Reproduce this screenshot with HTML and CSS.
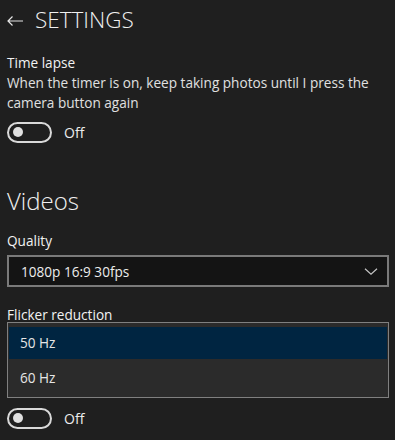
FILE: index.html
```html
<!DOCTYPE html>
<html>
<head>
<meta charset="utf-8">
<link rel="stylesheet" href="styles.css">
</head>
<body>
<div class="page">
  <header class="header">
    <svg class="back" width="16" height="10" viewBox="0 0 16 10"><path d="M5.5 0.5 L1 5 L5.5 9.5 M1 5 H16" fill="none" stroke="#e6e6e6" stroke-width="1.2"/></svg>
    <span class="title">SETTINGS</span>
  </header>

  <div class="setting">
    <div class="label">Time lapse</div>
    <div class="desc">When the timer is on, keep taking photos until I press the camera button again</div>
    <div class="toggle-row">
      <span class="toggle"><span class="knob"></span></span>
      <span class="state">Off</span>
    </div>
  </div>

  <h2 class="section">Videos</h2>

  <div class="field">
    <div class="label">Quality</div>
    <div class="combo">
      <span>1080p 16:9 30fps</span>
      <svg class="chev" width="14" height="7" viewBox="0 0 14 7"><path d="M1 0.8 L7 6.2 L13 0.8" fill="none" stroke="#c4c4c4" stroke-width="1.2"/></svg>
    </div>
  </div>

  <div class="field flicker">
    <div class="label tight">Flicker reduction</div>
    <div class="popup">
      <div class="item selected">50 Hz</div>
      <div class="item second">60 Hz</div>
    </div>
  </div>

  <div class="toggle-row last">
    <span class="toggle"><span class="knob"></span></span>
    <span class="state">Off</span>
  </div>
</div>
</body>
</html>
```
FILE: styles.css
```css
html, body {
  margin: 0;
  padding: 0;
  background: #1f1f1f;
}
body {
  width: 395px;
  height: 440px;
  overflow: hidden;
  font-family: "Open Sans", "Noto Sans", sans-serif;
  font-size: 13.6px;
  color: #f0f0f0;
}
.page {
  padding: 0 6px 0 7px;
}
.header {
  display: flex;
  align-items: center;
  height: 40px;
}
.back {
  margin-right: 12px;
  margin-top: 1px;
}
.title {
  font-size: 22.5px;
  font-weight: 300;
  line-height: 40px;
}
.setting {
  margin-top: 13px;
}
.label {
  line-height: 20px;
  color: #f2f2f2;
}
.desc {
  line-height: 20px;
  color: #e0e0e0;
}
.toggle-row {
  display: flex;
  align-items: center;
  margin-top: 9px;
  height: 20px;
}
.toggle {
  box-sizing: border-box;
  width: 45px;
  height: 21px;
  border: 2px solid #d9d9d9;
  border-radius: 11px;
  display: flex;
  align-items: center;
  padding-left: 4px;
}
.knob {
  width: 10px;
  height: 10px;
  border-radius: 50%;
  background: #e0e0e0;
}
.state {
  margin-left: 12px;
  font-size: 14px;
  color: #ececec;
}
.section {
  margin: 44px 0 0 0;
  font-size: 24px;
  font-weight: 300;
  line-height: 30px;
  color: #f0f0f0;
}
.field {
  margin-top: 15px;
}
.combo {
  box-sizing: border-box;
  margin-top: 4px;
  height: 32px;
  border: 2px solid #7a7a7a;
  background: #141414;
  display: flex;
  align-items: center;
  justify-content: space-between;
  padding: 0 9px 0 12px;
  color: #ededed;
}
.flicker {
  margin-top: 20px;
}
.label.tight {
  line-height: 16px;
}
.popup {
  box-sizing: border-box;
  margin-top: -1px;
  border: 1px solid #808080;
  background: #2b2b2b;
  padding: 4px 1px 0 1px;
}
.item {
  height: 32px;
  line-height: 32px;
  padding-left: 11px;
  color: #e6e6e6;
}
.item.second {
  height: 38px;
  line-height: 38px;
}
.item.selected {
  background: #002541;
}
.toggle-row.last {
  margin-top: 10px;
}
```
